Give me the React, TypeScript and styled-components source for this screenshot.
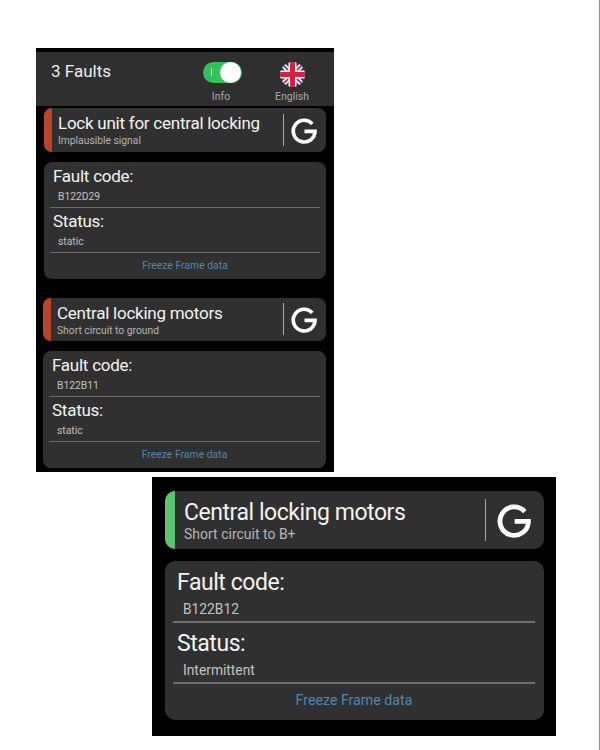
import React from "react";
import styled, { createGlobalStyle } from "styled-components";

const Global = createGlobalStyle`
  html, body { margin: 0; padding: 0; background: #fff; }
  body { font-family: Roboto, "Noto Sans", "Liberation Sans", sans-serif; }
`;

const Page = styled.div`
  width: 600px;
  height: 750px;
  box-sizing: border-box;
  background: #fff;
  border-right: 1px solid #8e8e8e;
  padding-top: 48px;
  overflow: hidden;
`;

const ShotSmall = styled.section`
  width: 298px;
  height: 424px;
  margin-left: 36px;
  box-sizing: border-box;
  background: #000;
  padding-top: 4px;
`;

const ShotLarge = styled.section`
  width: 404px;
  height: 259px;
  margin: 5px 0 0 152px;
  box-sizing: border-box;
  background: #000;
  padding: 14px 12px 0 13px;
`;

const Header = styled.header`
  height: 54px;
  background: #2f2f2f;
  display: flex;
  padding: 0 12px 0 15px;
  margin-bottom: 2px;
`;

const Count = styled.h1`
  flex: 1;
  margin: 9px 0 0;
  font-size: 17px;
  line-height: 20px;
  font-weight: 400;
  color: #ececec;
`;

const HeaderItem = styled.div`
  width: 60px;
  margin-left: 11px;
  display: flex;
  flex-direction: column;
  align-items: center;
  padding-top: 10px;
`;

const ToggleTrack = styled.div`
  width: 39px;
  height: 21px;
  border-radius: 11px;
  background: #35c05a;
  position: relative;
  left: 1px;
`;

const ToggleMark = styled.span`
  position: absolute;
  left: 8px;
  top: 6px;
  width: 1px;
  height: 8px;
  background: #d8f5df;
`;

const ToggleThumb = styled.span`
  position: absolute;
  right: 1px;
  top: 0;
  width: 21px;
  height: 21px;
  border-radius: 50%;
  background: #fff;
`;

const HeaderLabel = styled.span<{ $top: number }>`
  margin-top: ${(p) => p.$top}px;
  font-size: 10.5px;
  line-height: 12px;
  color: #a9a9a9;
`;

const Group = styled.div<{ $shift: number }>`
  margin: 0 8px 0 ${(p) => p.$shift}px;
`;

const FaultCard = styled.div<{ $large?: boolean }>`
  display: flex;
  height: ${(p) => (p.$large ? 58 : 43.5)}px;
  background: #303030;
  border-radius: ${(p) => (p.$large ? 10 : 8)}px;
  overflow: hidden;
  margin-bottom: ${(p) => (p.$large ? 12 : 10)}px;
`;

const Accent = styled.div<{ $color: string; $large?: boolean }>`
  width: ${(p) => (p.$large ? 10 : 8)}px;
  background: ${(p) => p.$color};
  flex: none;
`;

const FaultText = styled.div<{ $large?: boolean }>`
  flex: 1;
  padding-left: ${(p) => (p.$large ? 9 : 6)}px;
  padding-top: ${(p) => (p.$large ? 8 : 4)}px;
`;

const FaultTitle = styled.div<{ $large?: boolean }>`
  color: #f2f2f2;
  font-size: ${(p) => (p.$large ? 23 : 17)}px;
  letter-spacing: ${(p) => (p.$large ? -0.45 : -0.25)}px;
  line-height: ${(p) => (p.$large ? 27 : 23)}px;
`;

const FaultSub = styled.div<{ $large?: boolean }>`
  color: #b5b5b5;
  font-size: ${(p) => (p.$large ? 14 : 10.3)}px;
  line-height: ${(p) => (p.$large ? 16 : 12)}px;
`;

const GoogleCell = styled.div<{ $large?: boolean }>`
  flex: none;
  align-self: center;
  height: ${(p) => (p.$large ? 42 : 32)}px;
  width: ${(p) => (p.$large ? 59 : 43)}px;
  box-sizing: border-box;
  border-left: 1px solid #a8a8a8;
  display: flex;
  align-items: center;
  justify-content: center;
  padding: ${(p) => (p.$large ? "2px 2px 0 0" : "2px 3px 0 0")};
`;

const DetailCard = styled.div<{ $large?: boolean }>`
  background: #303030;
  border-radius: ${(p) => (p.$large ? 10 : 8)}px;
  height: ${(p) => (p.$large ? 159 : 117)}px;
  box-sizing: border-box;
  padding: ${(p) => (p.$large ? "8px 9px 0 8px" : "4px 6px 0 6px")};
`;

const DetailLabel = styled.div<{ $large?: boolean }>`
  color: #f2f2f2;
  font-size: ${(p) => (p.$large ? 23 : 17)}px;
  letter-spacing: ${(p) => (p.$large ? -0.45 : -0.25)}px;
  line-height: ${(p) => (p.$large ? 28 : 20)}px;
  padding-left: ${(p) => (p.$large ? 4 : 3)}px;
`;

const DetailValue = styled.div<{ $large?: boolean }>`
  color: #c2c2c2;
  font-size: ${(p) => (p.$large ? 13.8 : 10.3)}px;
  line-height: ${(p) => (p.$large ? 18 : 14)}px;
  padding: ${(p) => (p.$large ? "3px 0 3px 10px" : "4px 0 3px 8px")};
  border-bottom: ${(p) => (p.$large ? 2 : 1)}px solid #6c6c6c;
  margin-bottom: ${(p) => (p.$large ? 7 : 3)}px;
`;

const FreezeLink = styled.a<{ $large?: boolean }>`
  display: block;
  text-align: center;
  color: #4f87b5;
  font-size: ${(p) => (p.$large ? 14.2 : 10.4)}px;
  line-height: ${(p) => (p.$large ? 20 : 14)}px;
  padding-top: ${(p) => (p.$large ? 0 : 3)}px;
  margin-top: ${(p) => (p.$large ? -1 : 0)}px;
`;

const Spacer = styled.div`
  height: 19px;
`;

const GoogleG = ({ size }: { size: number }) => (
  <svg width={size} height={size} viewBox="0 0 32 32" fill="none" aria-hidden="true">
    <path
      d="M26.2 7.2A13.4 13.4 0 1 0 29.6 16.4H16.6"
      stroke="#fff"
      strokeWidth="4.5"
    />
  </svg>
);

const UkFlag = () => (
  <svg width="25" height="25" viewBox="0 0 25 25" aria-hidden="true">
    <defs>
      <clipPath id="ukclip">
        <circle cx="12.5" cy="12.5" r="12.5" />
      </clipPath>
    </defs>
    <g clipPath="url(#ukclip)">
      <rect width="25" height="25" fill="#1f3a7a" />
      <path d="M0 0L25 25M25 0L0 25" stroke="#fff" strokeWidth="5" />
      <path d="M0 0L25 25M25 0L0 25" stroke="#d4213d" strokeWidth="1.8" />
      <path d="M12.5 0V25M0 12.5H25" stroke="#fff" strokeWidth="8" />
      <path d="M12.5 0V25M0 12.5H25" stroke="#d4213d" strokeWidth="5" />
    </g>
  </svg>
);

type Fault = {
  title: string;
  sub: string;
  code: string;
  status: string;
  accent: string;
};

const Fault = ({ fault, large }: { fault: Fault; large?: boolean }) => (
  <>
    <FaultCard $large={large}>
      <Accent $color={fault.accent} $large={large} />
      <FaultText $large={large}>
        <FaultTitle $large={large}>{fault.title}</FaultTitle>
        <FaultSub $large={large}>{fault.sub}</FaultSub>
      </FaultText>
      <GoogleCell $large={large}>
        <GoogleG size={large ? 34 : 26} />
      </GoogleCell>
    </FaultCard>
    <DetailCard $large={large}>
      <DetailLabel $large={large}>Fault code:</DetailLabel>
      <DetailValue $large={large}>{fault.code}</DetailValue>
      <DetailLabel $large={large}>Status:</DetailLabel>
      <DetailValue $large={large}>{fault.status}</DetailValue>
      <FreezeLink $large={large}>Freeze Frame data</FreezeLink>
    </DetailCard>
  </>
);

const red = "#b9442b";

export default function App() {
  return (
    <Page>
      <Global />
      <ShotSmall>
        <Header>
          <Count>3 Faults</Count>
          <HeaderItem>
            <ToggleTrack>
              <ToggleMark />
              <ToggleThumb />
            </ToggleTrack>
            <HeaderLabel $top={8}>Info</HeaderLabel>
          </HeaderItem>
          <HeaderItem>
            <UkFlag />
            <HeaderLabel $top={4}>English</HeaderLabel>
          </HeaderItem>
        </Header>
        <Group $shift={8}>
          <Fault
            fault={{
              title: "Lock unit for central locking",
              sub: "Implausible signal",
              code: "B122D29",
              status: "static",
              accent: red,
            }}
          />
        </Group>
        <Spacer />
        <Group $shift={7}>
          <Fault
            fault={{
              title: "Central locking motors",
              sub: "Short circuit to ground",
              code: "B122B11",
              status: "static",
              accent: red,
            }}
          />
        </Group>
      </ShotSmall>
      <ShotLarge>
        <Fault
          large
          fault={{
            title: "Central locking motors",
            sub: "Short circuit to B+",
            code: "B122B12",
            status: "Intermittent",
            accent: "#5cc470",
          }}
        />
      </ShotLarge>
    </Page>
  );
}
